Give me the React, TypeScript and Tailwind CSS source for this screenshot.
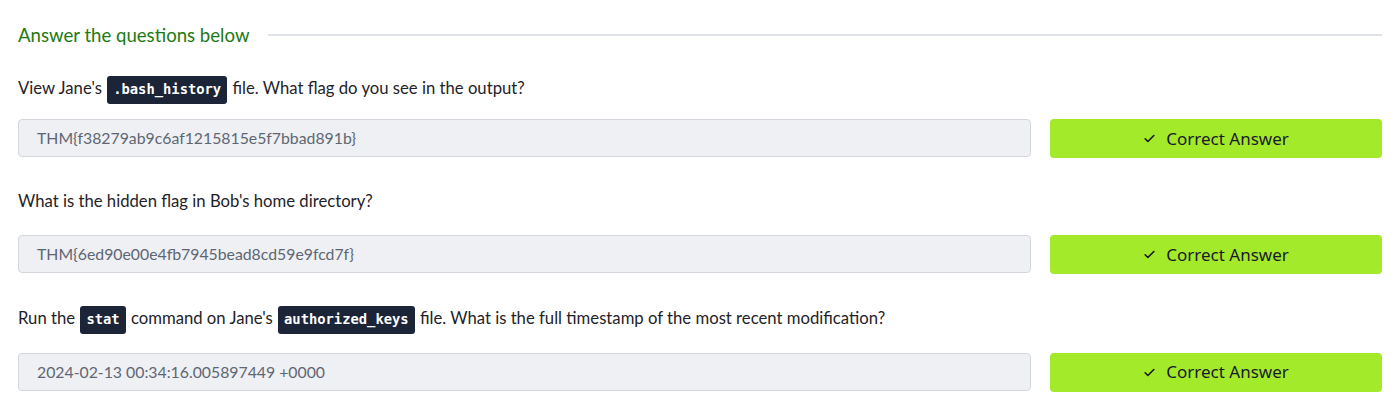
import React from "react";

const Code = ({ children }: { children: React.ReactNode }) => (
  <code className="inline-flex items-center h-[28px] px-[6px] mx-[1px] rounded-[3px] bg-[#1c2538] text-white text-[13.8px] font-bold leading-none align-middle [font-family:'DejaVu_Sans_Mono',monospace]">
    {children}
  </code>
);

const Check = () => (
  <svg width="13" height="13" viewBox="0 0 24 24" fill="none" stroke="#1a1a1a" strokeWidth="3" strokeLinecap="round" strokeLinejoin="round">
    <path d="M4 12.5l5 5L20 6.5" />
  </svg>
);

const Row = ({ value }: { value: string }) => (
  <div className="flex gap-[19px] items-center">
    <div className="flex-1 h-[38px] flex items-center px-[18px] bg-[#eef0f3] border border-[#d3d7dd] rounded-[4px] text-[15.8px] text-[#5f6673]">
      {value}
    </div>
    <div className="w-[332px] h-[39px] flex items-center justify-center gap-[10px] bg-[#a3ea2a] rounded-[4px] text-[17px] text-[#1a1a2a] [font-family:'Noto_Sans',sans-serif]">
      <Check />
      <span>Correct Answer</span>
    </div>
  </div>
);

export default function App() {
  return (
    <div className="w-[1400px] h-[420px] bg-white pl-[18px] pr-[18px] pt-[22px] [font-family:Lato,'Liberation_Sans',sans-serif] text-[#1f2328]">
      <div className="flex items-center gap-[19px]">
        <h3 className="text-[18.6px] text-[#1e7a12] whitespace-nowrap leading-[26px]">Answer the questions below</h3>
        <div className="flex-1 h-[2px] bg-[#dfe2e8]" />
      </div>
      <p className="mt-[25px] text-[16.7px] leading-[30px]">
        View Jane's <Code>.bash_history</Code> file. What flag do you see in the output?
      </p>
      <div className="mt-[15px]">
        <Row value="THM{f38279ab9c6af1215815e5f7bbad891b}" />
      </div>
      <p className="mt-[28px] text-[16.7px] leading-[30px]">What is the hidden flag in Bob's home directory?</p>
      <div className="mt-[19px]">
        <Row value="THM{6ed90e00e4fb7945bead8cd59e9fcd7f}" />
      </div>
      <p className="mt-[29px] text-[16.7px] leading-[30px]">
        Run the <Code>stat</Code> command on Jane's <Code>authorized_keys</Code> file. What is the full timestamp of the most recent modification?
      </p>
      <div className="mt-[19px]">
        <Row value="2024-02-13 00:34:16.005897449 +0000" />
      </div>
    </div>
  );
}
